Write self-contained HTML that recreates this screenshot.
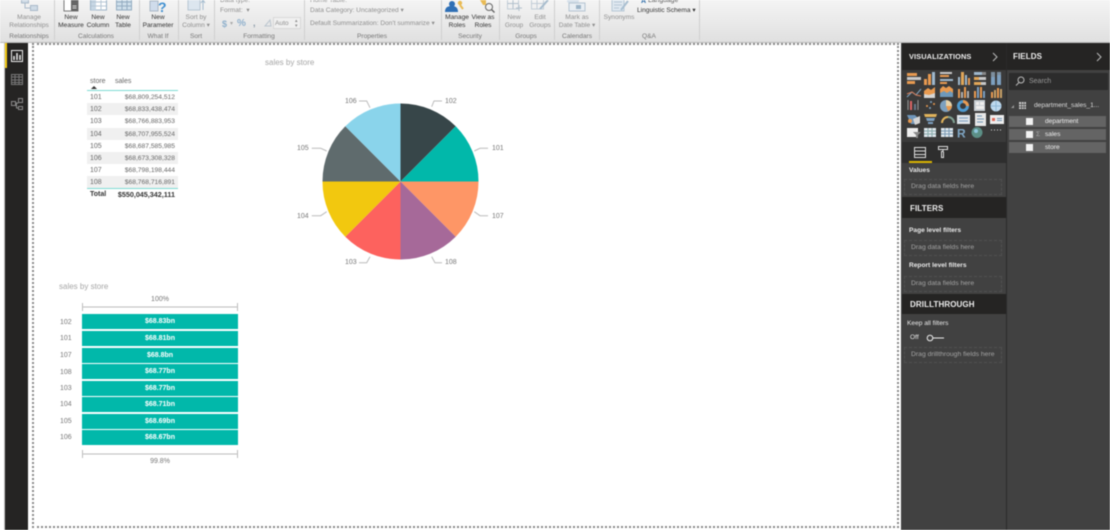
<!DOCTYPE html>
<html><head><meta charset="utf-8">
<style>
html,body{margin:0;padding:0;width:1110px;height:530px;overflow:hidden;background:#fff}
body{font-family:"Liberation Sans",sans-serif;position:relative}
#w{position:absolute;left:0;top:0;width:1110px;height:530px;overflow:hidden;filter:blur(.45px)}
.a{position:absolute}
.t{position:absolute;white-space:nowrap;line-height:10px;font-size:6.6px}
.c{transform:translateX(-50%)}
.r{transform:translateX(-100%)}
.d{color:#333}
.g{color:#8f8f8f}
.s{position:absolute;top:0;width:1px;height:40px;background:#cfcfcf}
.sec{position:absolute;top:32px;font-size:6.6px;line-height:10px;color:#777;white-space:nowrap;transform:translateX(-50%)}
.rw{position:absolute;left:87px;width:91px;height:12px}
.tl{position:absolute;left:90px;font-size:7px;line-height:10px;color:#666}
.tv{position:absolute;left:175px;transform:translateX(-100%);font-size:6.7px;line-height:10px;color:#666;white-space:nowrap}
.bar{position:absolute;left:82px;width:156px;height:15px;background:#01b8aa;color:#fff;text-align:center;font-size:7px;font-weight:bold;line-height:15px}
.bl{position:absolute;left:60px;font-size:7px;line-height:10px;color:#777}
.pl{position:absolute;font-size:7px;line-height:10px;color:#777}
.hd{position:absolute;background:#252423;color:#eee;font-size:8px;font-weight:bold;letter-spacing:.1px}
.dz{position:absolute;left:904px;width:98px;height:16px;box-sizing:border-box;border:1px dashed #505050;color:#a3a3a3;font-size:6.8px;line-height:14px;padding-left:6px;white-space:nowrap}
.lb{position:absolute;color:#e8e8e8;font-size:6.6px;line-height:10px;white-space:nowrap}
.f{position:absolute;left:1009px;width:97px;height:11px;background:#646464;color:#eee;font-size:6.6px;line-height:11px}
.f i{position:absolute;left:17px;top:2px;width:7px;height:7px;background:#f2f2f2}
.f span{position:absolute;left:36px;top:0}
</style></head><body><div id="w">

<!-- ribbon -->
<div class="a" style="left:0;top:0;width:1110px;height:42px;background:linear-gradient(#f4f4f4,#e0e0e0)"></div>
<div class="a" style="left:0;top:42px;width:1110px;height:1px;background:#bdbdbd"></div>
<div class="s" style="left:54px"></div><div class="s" style="left:139px"></div><div class="s" style="left:178px"></div><div class="s" style="left:214px"></div><div class="s" style="left:304px"></div><div class="s" style="left:441px"></div><div class="s" style="left:499px"></div><div class="s" style="left:554px"></div><div class="s" style="left:599px"></div><div class="s" style="left:699px"></div>

<svg class="a" style="left:0;top:0" width="720" height="16" viewBox="0 0 720 16">
 <g fill="none" stroke="#a9b9c9" stroke-width="1"><rect x="21.5" y="-3" width="7" height="6" fill="#cfdbe6"/><rect x="30.5" y="5.5" width="7" height="5" fill="#cfdbe6"/><path d="M25 3v5h5"/></g>
 <rect x="64" y="-2" width="14" height="13" fill="#fff" stroke="#777"/><rect x="71" y="0" width="7" height="11" fill="#666"/><path d="M72.5 6h4M72.5 8h4" stroke="#ddd"/>
 <rect x="90.5" y="-2" width="16" height="12" fill="#fff" stroke="#9db4c8"/><rect x="91" y="-2" width="5" height="12" fill="#c6d6e4"/><path d="M91 2h15M91 6h15M101 -2v12" stroke="#b7c7d5"/>
 <rect x="116.5" y="-2" width="15" height="12" fill="#cfdfeb" stroke="#93acc1"/><path d="M117 2h14M117 6h14M122 -2v12M127 -2v12" stroke="#93acc1"/>
 <rect x="150" y="1" width="8" height="10" fill="#cfdceb" stroke="#aab8c6"/><text x="158" y="12" font-family="Liberation Sans" font-size="14" font-weight="bold" fill="#3f8fd0">?</text>
 <rect x="188" y="-2" width="12" height="12" fill="#dce6ef" stroke="#b7c6d3"/><path d="M203 0v10M205 3l-2-3-2 3" stroke="#a5bccf" fill="none"/>
 <circle cx="452" cy="4" r="3" fill="#2f6fb5"/><path d="M445 12c0-5 3-6 7-6s6 2 6 6z" fill="#2f6fb5"/><circle cx="460" cy="3" r="2.2" fill="#e9bb55"/><path d="M460 5l3 4" stroke="#e9bb55" stroke-width="2"/>
 <circle cx="489" cy="7" r="3.5" fill="none" stroke="#666"/><path d="M491.500 9.500l3 3" stroke="#666" stroke-width="1.400"/><path d="M480 0h6v5h-3z" fill="#e9bb55"/>
 <rect x="507.500" y="-2" width="11" height="11" fill="none" stroke="#c2cdd7"/><path d="M513-2v11M507.500 3.500h11M516 8h6M519 5v6" stroke="#b2c0cc"/>
 <rect x="531.500" y="-2" width="12" height="11" fill="none" stroke="#c2cdd7"/><path d="M537-2v11M531.500 3.500h12" stroke="#c2cdd7"/><path d="M540 9l8-9" stroke="#a7bccd" stroke-width="2"/>
 <ellipse cx="573" cy="1" rx="6" ry="3" fill="#d5e0ea"/><rect x="569" y="3" width="16" height="8" fill="#e8eef3" stroke="#b5c4d1"/><rect x="576" y="5" width="5" height="4" fill="#9db3c6"/>
 <rect x="612" y="-2" width="12" height="13" fill="#dfe8f0" stroke="#b7c8d6"/><path d="M614 2h8M614 5h8M614 8h5" stroke="#b7c8d6"/><path d="M621 10l7-9" stroke="#a9bfd1" stroke-width="2"/>
 <text x="641" y="3" font-family="Liberation Sans" font-size="7" font-weight="bold" fill="#2d6ca8">A</text><text x="648" y="2" font-family="Liberation Sans" font-size="6.800" fill="#555">Language</text>
</svg>

<div class="t c g" style="left:29px;top:13px">Manage</div><div class="t c g" style="left:29px;top:21px">Relationships</div>
<div class="t c d" style="left:71px;top:13px">New</div><div class="t c d" style="left:71px;top:21px">Measure</div>
<div class="t c d" style="left:98px;top:13px">New</div><div class="t c d" style="left:98px;top:21px">Column</div>
<div class="t c d" style="left:123px;top:13px">New</div><div class="t c d" style="left:123px;top:21px">Table</div>
<div class="t c d" style="left:158px;top:13px">New</div><div class="t c d" style="left:158px;top:21px">Parameter</div>
<div class="t c g" style="left:196px;top:13px">Sort by</div><div class="t c g" style="left:196px;top:21px">Column ▾</div>
<div class="t g" style="left:220px;top:-4px">Data type:</div>
<div class="t g" style="left:220px;top:6px">Format: &nbsp;▾</div>
<div class="t" style="left:222px;top:19px;font-size:9px;font-weight:bold;color:#8fb0cc">$</div>
<div class="t" style="left:230px;top:19px;font-size:6px;color:#aaa">▾</div>
<div class="t" style="left:237px;top:19px;font-size:10px;font-weight:bold;color:#8fb0cc">%</div>
<div class="t" style="left:253px;top:18px;font-size:9px;font-weight:bold;color:#8a9aa8">,</div>
<svg class="a" style="left:263px;top:18px" width="10" height="10" viewBox="0 0 10 10"><path d="M2 8l5-6 1 6z" fill="none" stroke="#bcc6cf"/></svg>
<div class="a" style="left:273px;top:17px;width:28px;height:12px;box-sizing:border-box;border:1px solid #d8d8d8;background:#f0f0f0"></div>
<div class="t g" style="left:275px;top:19px">Auto</div>
<div class="t g" style="left:295px;top:16px;font-size:5px">▴</div><div class="t g" style="left:295px;top:21px;font-size:5px">▾</div>
<div class="t g" style="left:310px;top:-4px">Home Table:</div>
<div class="t g" style="left:310px;top:6px">Data Category: Uncategorized ▾</div>
<div class="t g" style="left:310px;top:19px">Default Summarization: Don't summarize ▾</div>
<div class="t c d" style="left:457px;top:13px">Manage</div><div class="t c d" style="left:457px;top:21px">Roles</div>
<div class="t c d" style="left:483px;top:13px">View as</div><div class="t c d" style="left:483px;top:21px">Roles</div>
<div class="t c g" style="left:514px;top:13px">New</div><div class="t c g" style="left:514px;top:21px">Group</div>
<div class="t c g" style="left:540px;top:13px">Edit</div><div class="t c g" style="left:540px;top:21px">Groups</div>
<div class="t c g" style="left:577px;top:13px">Mark as</div><div class="t c g" style="left:577px;top:21px">Date Table ▾</div>
<div class="t c g" style="left:619px;top:13px">Synonyms</div>
<div class="t d" style="left:637px;top:6px">Linguistic Schema ▾</div>

<div class="sec" style="left:29px">Relationships</div>
<div class="sec" style="left:96px">Calculations</div>
<div class="sec" style="left:158px">What If</div>
<div class="sec" style="left:196px">Sort</div>
<div class="sec" style="left:259px">Formatting</div>
<div class="sec" style="left:372px">Properties</div>
<div class="sec" style="left:470px">Security</div>
<div class="sec" style="left:526px">Groups</div>
<div class="sec" style="left:577px">Calendars</div>
<div class="sec" style="left:649px">Q&amp;A</div>

<!-- left nav -->
<div class="a" style="left:4px;top:43px;width:1px;height:487px;background:#c4c4c4"></div>
<div class="a" style="left:5px;top:43px;width:23px;height:487px;background:#252423"></div>
<div class="a" style="left:5px;top:43px;width:2px;height:25px;background:#f2c80f"></div>
<svg class="a" style="left:5px;top:43px" width="23" height="75" viewBox="0 0 23 75">
 <rect x="6.500" y="7.500" width="11" height="11" fill="none" stroke="#eee"/><path d="M9 17v-4M12 17v-7M15 17v-5" stroke="#eee" stroke-width="1.500"/>
 <rect x="6.500" y="31.500" width="11" height="10" fill="none" stroke="#777"/><path d="M6.500 34h11M6.500 37h11M6.500 39.500h11M10 31.500v10M14 31.500v10" stroke="#777"/>
 <path d="M6.500 58.500h4v4h-4zM13.500 55.500h4v4h-4zM13.500 63.500h4v3h-4zM10.500 60h3M11.500 60v5h2" fill="none" stroke="#888"/>
</svg>

<!-- canvas -->
<div class="a" style="left:32px;top:43px;width:867px;height:485px;box-sizing:border-box;border:2px dotted #8a8a8a"></div>
<div class="t" style="left:265px;top:57.500px;font-size:8px;color:#a6a6a6">sales by store</div>

<!-- table -->
<div class="tl" style="top:76.500px">store</div><div class="tl" style="top:76.500px;left:115px">sales</div>
<div class="a" style="left:91px;top:86px;width:0;height:0;border-left:3px solid transparent;border-right:3px solid transparent;border-bottom:3px solid #333"></div>
<div class="a" style="left:87px;top:90px;width:91px;height:1px;background:#7fdcd4"></div>
<div class="rw" style="top:103px;background:#f0f0f0"></div>
<div class="rw" style="top:128px;background:#f0f0f0"></div>
<div class="rw" style="top:152px;background:#f0f0f0"></div>
<div class="rw" style="top:176px;background:#f0f0f0"></div>
<div class="a" style="left:87px;top:188px;width:91px;height:1px;background:#7fdcd4"></div>
<div class="tl" style="top:93px">101</div><div class="tv" style="top:93px">$68,809,254,512</div>
<div class="tl" style="top:105px">102</div><div class="tv" style="top:105px">$68,833,438,474</div>
<div class="tl" style="top:117px">103</div><div class="tv" style="top:117px">$68,766,883,953</div>
<div class="tl" style="top:129.500px">104</div><div class="tv" style="top:129.500px">$68,707,955,524</div>
<div class="tl" style="top:142px">105</div><div class="tv" style="top:142px">$68,687,585,985</div>
<div class="tl" style="top:154px">106</div><div class="tv" style="top:154px">$68,673,308,328</div>
<div class="tl" style="top:166px">107</div><div class="tv" style="top:166px">$68,798,198,444</div>
<div class="tl" style="top:178px">108</div><div class="tv" style="top:178px">$68,768,716,891</div>
<div class="tl" style="top:190px;color:#333;font-weight:bold">Total</div><div class="tv" style="top:190px;color:#333;font-weight:bold;font-size:7.200px">$550,045,342,111</div>

<!-- pie -->
<svg class="a" style="left:0;top:0" width="900" height="300" viewBox="0 0 900 300">
 <path d="M400.500 181.500L400.500 103.500A78 78 0 0 1 455.700 126.300Z" fill="#374649"/>
 <path d="M400.500 181.500L455.700 126.300A78 78 0 0 1 478.500 181.500Z" fill="#01b8aa"/>
 <path d="M400.500 181.500L478.500 181.500A78 78 0 0 1 455.700 236.700Z" fill="#fe9666"/>
 <path d="M400.500 181.500L455.700 236.700A78 78 0 0 1 400.500 259.500Z" fill="#a66999"/>
 <path d="M400.500 181.500L400.500 259.500A78 78 0 0 1 345.300 236.700Z" fill="#fd625e"/>
 <path d="M400.500 181.500L345.300 236.700A78 78 0 0 1 322.500 181.500Z" fill="#f2c80f"/>
 <path d="M400.500 181.500L322.500 181.500A78 78 0 0 1 345.300 126.300Z" fill="#5f6b6d"/>
 <path d="M400.500 181.500L345.300 126.300A78 78 0 0 1 400.500 103.500Z" fill="#8ad4eb"/>
 <g fill="none" stroke="#bbb" stroke-width="1">
  <path d="M431.700 106.700L434 101H442M474.300 151L480 148.300H488M474.300 211.700L480 215.700H488M431.700 256.700L435 262.700H442M370 256.700L366.700 262.700H359M326.700 211.700L320.700 215.700H311.700M326.700 151L320.700 148.300H311.700M370 107.700L366.700 101H359"/>
 </g>
</svg>
<div class="pl" style="left:445px;top:96.500px">102</div>
<div class="pl" style="left:492px;top:143.500px">101</div>
<div class="pl" style="left:492px;top:211.500px">107</div>
<div class="pl" style="left:445px;top:258px">108</div>
<div class="pl" style="left:345px;top:258px">103</div>
<div class="pl" style="left:297px;top:211.500px">104</div>
<div class="pl" style="left:297px;top:143.500px">105</div>
<div class="pl" style="left:345px;top:96.500px">106</div>

<!-- bar -->
<div class="t" style="left:59px;top:281.500px;font-size:8px;color:#a6a6a6">sales by store</div>
<div class="t c" style="left:160px;top:294.500px;color:#777;font-size:7px">100%</div>
<div class="t c" style="left:160px;top:457px;color:#777;font-size:7px">99.8%</div>
<svg class="a" style="left:0;top:295px" width="300" height="170" viewBox="0 295 300 170"><path d="M82.500 303v8M82.500 307h155M237.500 303v8M82.500 450v8M82.500 454h155M237.500 450v8" stroke="#bdbdbd" fill="none"/></svg>
<div class="bar" style="top:314px">$68.83bn</div><div class="bl" style="top:317.500px">102</div>
<div class="bar" style="top:331px">$68.81bn</div><div class="bl" style="top:333.500px">101</div>
<div class="bar" style="top:348px">$68.8bn</div><div class="bl" style="top:350.500px">107</div>
<div class="bar" style="top:364px">$68.77bn</div><div class="bl" style="top:367.500px">108</div>
<div class="bar" style="top:381px">$68.77bn</div><div class="bl" style="top:383.500px">103</div>
<div class="bar" style="top:397px">$68.71bn</div><div class="bl" style="top:400px">104</div>
<div class="bar" style="top:414px">$68.69bn</div><div class="bl" style="top:416.500px">105</div>
<div class="bar" style="top:430px">$68.67bn</div><div class="bl" style="top:433px">106</div>

<!-- right panels -->
<div class="a" style="left:901px;top:43px;width:209px;height:487px;background:#414141"></div>
<div class="a" style="left:1006px;top:43px;width:1px;height:487px;background:#2a2a2a"></div>
<div class="hd" style="left:902px;top:43px;width:104px;height:27px;line-height:27px;text-indent:7px;font-size:7.400px">VISUALIZATIONS</div>
<div class="hd" style="left:1007px;top:43px;width:103px;height:27px;line-height:27px;text-indent:6px">FIELDS</div>
<svg class="a" style="left:990px;top:52px" width="120" height="10" viewBox="0 0 120 10"><path d="M3 1l4 4-4 4M107 1l4 4-4 4" fill="none" stroke="#bbb"/></svg>
<div class="a" style="left:902px;top:70px;width:104px;height:72px;background:#3a3a3a"></div>
<div class="a" style="left:1009px;top:73px;width:99px;height:17px;background:#2c2c2c"></div>
<svg class="a" style="left:1015px;top:76px" width="10" height="10" viewBox="0 0 10 10"><circle cx="6" cy="4" r="3" fill="none" stroke="#bbb"/><path d="M4 6.500L1 9.500" stroke="#bbb"/></svg>
<div class="t" style="left:1029px;top:77px;color:#9a9a9a;font-size:7px">Search</div>

<!-- viz icons -->
<svg class="a" style="left:905px;top:70px" width="100" height="72" viewBox="0 0 100 72">
 <g transform="translate(0,-1)">
  <path d="M2 4h10v3H2z" fill="#e89a50"/><path d="M2 8h14v3H2z" fill="#c9c9c9"/><path d="M2 12h8v3H2z" fill="#e89a50"/>
  <path d="M19 10h3v6h-3z" fill="#e89a50"/><path d="M23 5h3v11h-3z" fill="#e89a50"/><path d="M27 3h3v13h-3z" fill="#9fb8cc"/>
  <path d="M35 3h12v2H35z" fill="#c8c8c8"/><path d="M35 6h9v2H35z" fill="#e89a50"/><path d="M35 10h13v2H35z" fill="#9fb8cc"/><path d="M35 13h7v2H35z" fill="#e89a50"/>
  <path d="M53 8h2v8h-2zM60 6h2v10h-2z" fill="#9fb8cc"/><path d="M56 3h3v13h-3z" fill="#e0a659"/><path d="M63 9h2v7h-2z" fill="#e89a50"/>
  <path d="M69 3h8v3h-8z" fill="#9fb8cc"/><path d="M77 3h4v3h-4z" fill="#888"/><path d="M69 8h5v3h-5zM69 13h7v3h-7z" fill="#e0a659"/><path d="M74 8h7v3h-7zM76 13h5v3h-5z" fill="#c8c8c8"/>
  <path d="M86 3h4v13h-4zM92 3h4v13h-4z" fill="#7d8f9f"/><path d="M86 8h4v8h-4zM92 6h4v10h-4z" fill="#7da0bf"/>
 </g>
 <g transform="translate(0,-3)">
  <path d="M2 30l5-5 4 3 5-6" fill="none" stroke="#7fa6c4"/><path d="M2 27l5-2 4 3 5 1" fill="none" stroke="#d67e5b"/>
  <path d="M19 31v-7l4-3 3 2 4-3v11z" fill="#e89a50"/><path d="M19 31v-4l5 1 6-2v5z" fill="#d5d5d5"/>
  <path d="M35 30v-8l3-3 3 2 3-2 4 3v8z" fill="#e89a50"/><path d="M35 26l4-2 3 2 3-2 3 2v4H35z" fill="#6e99bb"/>
  <path d="M53 22h2v9h-2zM59 20h2v11h-2z" fill="#e89a50"/><path d="M56 25h2v6h-2zM62 24h2v7h-2z" fill="#b0b0b0"/>
  <path d="M69 24h2v7h-2zM75 20h2v11h-2z" fill="#e89a50"/><path d="M72 20h2v11h-2zM78 24h2v7h-2z" fill="#7da0bf"/>
  <path d="M86 25h2v6h-2zM92 21h2v10h-2z" fill="#e89a50"/><path d="M89 23h2v8h-2zM95 22h2v9h-2z" fill="#c9a168"/>
 </g>
 <g transform="translate(0,-4)">
  <path d="M3 34v10M13 34v10" stroke="#999"/><path d="M5 44v-9h2v9z" fill="#d66"/><path d="M9 44v-6h2v6z" fill="#678"/>
  <circle cx="22" cy="40" r="1" fill="#e89a50"/><circle cx="26" cy="36" r="1" fill="#7da0bf"/><circle cx="25" cy="42" r="1" fill="#7da0bf"/><circle cx="29" cy="38" r="1" fill="#e89a50"/>
  <circle cx="41" cy="40" r="6" fill="#7da0bf"/><path d="M41 40V34a6 6 0 0 1 6 6z" fill="#e8d2a8"/><path d="M41 40h6a6 6 0 0 1-4 5z" fill="#e89a50"/>
  <circle cx="58" cy="40" r="4.500" fill="none" stroke="#4f9bd0" stroke-width="3"/><path d="M58 35.500a4.500 4.500 0 0 1 4.500 4.500" fill="none" stroke="#e89a50" stroke-width="3"/>
  <path d="M69 34h11v11H69z" fill="#c8ced4"/><path d="M71 36h3v3h-3zM75 36h4v3h-4zM71 40h8v3h-8z" fill="#eee"/>
  <circle cx="91" cy="40" r="5.500" fill="#bed9ee"/><path d="M85.500 40h11M91 34.500v11" stroke="#8fb7d6"/>
 </g>
 <g transform="translate(0,-5)">
  <path d="M2 50h8l3 3v6H6z" fill="#7096ba"/><path d="M8 54l7-3v7l-5 2z" fill="#d5d5d5"/><circle cx="5" cy="56" r="2" fill="#e89a50"/>
  <path d="M19 49h13l-1 3H20z" fill="#e0b35c"/><path d="M21 53h9l-1 3h-7z" fill="#7da0bf"/><path d="M23 57h5v2h-5z" fill="#7da0bf"/>
  <path d="M37 58a6 6 0 0 1 6-6" fill="none" stroke="#e0b35c" stroke-width="2"/><path d="M43 52a6 6 0 0 1 6 6" fill="none" stroke="#7f9f90" stroke-width="2"/>
  <rect x="52" y="50" width="13" height="9" fill="#dfe4e9"/><path d="M54 53h9M54 56h9" stroke="#7da0bf"/>
  <rect x="70" y="48" width="11" height="13" fill="#e8e8e8"/><path d="M72 51h5M72 54h7M72 57h6" stroke="#6f93b2"/>
  <rect x="85" y="50" width="14" height="9" fill="#eee"/><path d="M87 53h3v3h-3z" fill="#e06a5a"/><path d="M92 53h5v1h-5zM92 55h5v1h-5z" fill="#6f93b2"/>
 </g>
 <g transform="translate(0,-5)">
  <rect x="2" y="63" width="11" height="9" fill="#eee"/><path d="M8 67h8l-3 3v3h-2v-3z" fill="#888"/>
  <rect x="19" y="63" width="12" height="9" fill="#dfe6ec"/><path d="M19 66h12M19 69h12M23 63v9M27 63v9" stroke="#8aa"/>
  <rect x="36" y="63" width="12" height="9" fill="#dfe6ec"/><path d="M36 66h12M36 69h12M40 63v9M44 63v9" stroke="#7a9ab3"/>
  <text x="52" y="72.500" font-family="Liberation Sans" font-size="12" font-weight="bold" fill="#7fa6c4">R</text>
  <circle cx="72" cy="67.500" r="5.500" fill="#5c8f86"/><circle cx="71" cy="66" r="2" fill="#8fc5dd"/>
  <path d="M86 65h1M89 65h1M92 65h1M95 65h1" stroke="#ddd"/>
 </g>
</svg>

<!-- tabs -->
<div class="a" style="left:902px;top:142px;width:104px;height:21px;background:#2e2e2e"></div>
<div class="a" style="left:909px;top:161px;width:23px;height:2px;background:#d9b300"></div>
<svg class="a" style="left:902px;top:142px" width="60" height="20" viewBox="0 0 60 20"><path d="M12.500 5.500h11v10h-11zM12.500 9h11M12.500 12.500h11" fill="none" stroke="#ddd"/><path d="M36.500 4.500h9v3h-9zM41 7.500v2h-1.500v6h2v-6" fill="none" stroke="#ddd"/></svg>

<div class="lb" style="left:909px;top:166px;font-weight:bold">Values</div>
<div class="dz" style="top:179px">Drag data fields here</div>
<div class="hd" style="left:902px;top:197px;width:104px;height:21px;line-height:24px;text-indent:8px">FILTERS</div>
<div class="lb" style="left:909px;top:226px;font-weight:bold">Page level filters</div>
<div class="dz" style="top:240px">Drag data fields here</div>
<div class="lb" style="left:909px;top:261px;font-weight:bold">Report level filters</div>
<div class="dz" style="top:276px">Drag data fields here</div>
<div class="hd" style="left:902px;top:294px;width:104px;height:20px;line-height:22px;text-indent:8px">DRILLTHROUGH</div>
<div class="lb" style="left:907px;top:319px">Keep all filters</div>
<div class="lb" style="left:910px;top:333px">Off</div>
<svg class="a" style="left:926px;top:333px" width="20" height="10" viewBox="0 0 20 10"><circle cx="4" cy="5" r="2.800" fill="none" stroke="#eee"/><path d="M7 5h11" stroke="#eee"/></svg>
<div class="dz" style="top:347px">Drag drillthrough fields here</div>

<!-- fields -->
<svg class="a" style="left:1010px;top:100px" width="22" height="12" viewBox="0 0 22 12"><path d="M1 8h3V5z" fill="#999"/><rect x="9" y="2" width="7" height="7" fill="#ccc"/><path d="M9 4.500h7M9 7h7M11.500 2v7M14 2v7" stroke="#444" stroke-width=".7"/></svg>
<div class="lb" style="left:1034px;top:100.500px;color:#ddd">department_sales_1...</div>
<div class="f" style="top:116px;height:11px"><i></i><span>department</span></div>
<div class="f" style="top:129px"><i></i><span style="left:27px;color:#aaa">Σ</span><span>sales</span></div>
<div class="f" style="top:141.500px"><i></i><span>store</span></div>
</div></body></html>
